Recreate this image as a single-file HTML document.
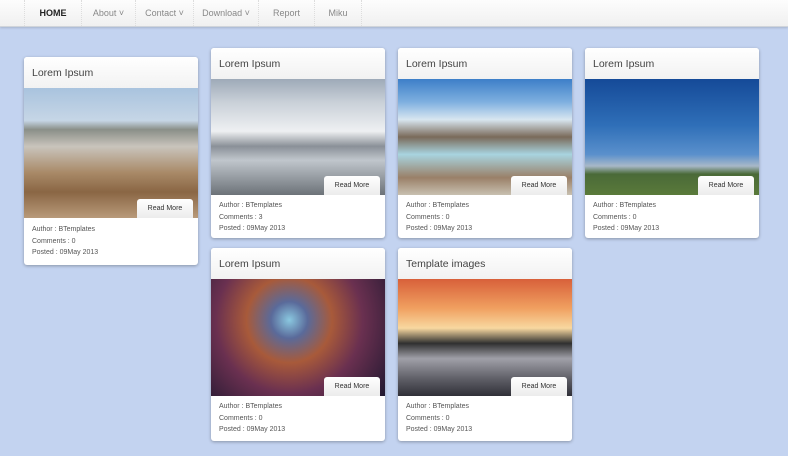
<!DOCTYPE html>
<html><head><style>
*{margin:0;padding:0;box-sizing:border-box}
body{width:788px;height:456px;background:#c3d3f0;font-family:"Liberation Sans",sans-serif;position:relative;overflow:hidden}
.nav{position:absolute;left:0;top:0;width:788px;height:27px;background:linear-gradient(#fdfdfd,#f0f0f0);border-bottom:1px solid #d0d4da;box-shadow:0 1px 2px rgba(0,0,0,.15)}
.nav span{position:absolute;top:0;height:26px;line-height:27px;font-size:9px;color:#888;text-align:center;border-left:1px dotted #ddd}
.card{position:absolute;width:174px;background:#fff;border-radius:3px;box-shadow:0 1px 3px rgba(0,0,0,.3);overflow:hidden}
.t{height:31px;padding:10px 8px 0;font-size:10.5px;color:#444;background:linear-gradient(#fff,#f2f2f2)}
.img{position:relative}
.rm{position:absolute;right:5px;bottom:0;width:56px;height:19px;background:linear-gradient(#fff,#ececec);border-radius:3px 3px 0 0;font-size:7px;color:#333;text-align:center;line-height:19px}
.info{padding:5px 8px 0;font-size:7px;color:#555;line-height:11.5px;height:43px}
</style></head><body>
<div class="nav">
<span style="left:24px;width:57px;color:#222;font-weight:bold">HOME</span>
<span style="left:81px;width:54px">About ˅</span>
<span style="left:135px;width:58px">Contact ˅</span>
<span style="left:193px;width:65px">Download ˅</span>
<span style="left:258px;width:56px">Report</span>
<span style="left:314px;width:48px;border-right:1px dotted #ddd">Miku</span>
</div>

<div class="card" style="left:24px;top:57px">
<div class="t">Lorem Ipsum</div>
<div class="img" style="height:130px;background:linear-gradient(#a9c3de 0%,#c6d6e6 25%,#8a8f88 32%,#c9c4bc 45%,#a98a68 65%,#8a6644 80%,#b89a7a 100%)"><div class="rm">Read More</div></div>
<div class="info" style="height:47px;padding-top:6px">Author : BTemplates<br>Comments : 0<br>Posted : 09May 2013</div>
</div>

<div class="card" style="left:211px;top:48px">
<div class="t">Lorem Ipsum</div>
<div class="img" style="height:116px;background:linear-gradient(#9eaab8 0%,#c9d0d8 20%,#eef0f2 45%,#8a9098 58%,#c0c6cc 70%,#6c7278 100%)"><div class="rm">Read More</div></div>
<div class="info">Author : BTemplates<br>Comments : 3<br>Posted : 09May 2013</div>
</div>

<div class="card" style="left:398px;top:48px">
<div class="t">Lorem Ipsum</div>
<div class="img" style="height:116px;background:linear-gradient(#3d7fc8 0%,#7fb0e0 20%,#d8e6f0 35%,#7a6a5a 50%,#a8d4e0 65%,#9a8068 85%,#c8c0b0 100%)"><div class="rm">Read More</div></div>
<div class="info">Author : BTemplates<br>Comments : 0<br>Posted : 09May 2013</div>
</div>

<div class="card" style="left:585px;top:48px">
<div class="t">Lorem Ipsum</div>
<div class="img" style="height:116px;background:linear-gradient(#154a98 0%,#2f6fb8 40%,#5a90cc 65%,#a8b8c8 75%,#4a6a38 82%,#5a7a3a 100%)"><div class="rm">Read More</div></div>
<div class="info">Author : BTemplates<br>Comments : 0<br>Posted : 09May 2013</div>
</div>

<div class="card" style="left:211px;top:248px">
<div class="t">Lorem Ipsum</div>
<div class="img" style="height:117px;background:radial-gradient(circle at 45% 35%,#8ac8e0 0%,#5a6a9a 15%,#a85a3a 35%,#6a3050 60%,#201830 100%)"><div class="rm">Read More</div></div>
<div class="info" style="height:45px">Author : BTemplates<br>Comments : 0<br>Posted : 09May 2013</div>
</div>

<div class="card" style="left:398px;top:248px">
<div class="t">Template images</div>
<div class="img" style="height:117px;background:linear-gradient(#d8603a 0%,#f0a060 25%,#f8d8a0 42%,#303030 55%,#a0a0a8 68%,#606068 85%,#303038 100%)"><div class="rm">Read More</div></div>
<div class="info" style="height:45px">Author : BTemplates<br>Comments : 0<br>Posted : 09May 2013</div>
</div>
</body></html>
